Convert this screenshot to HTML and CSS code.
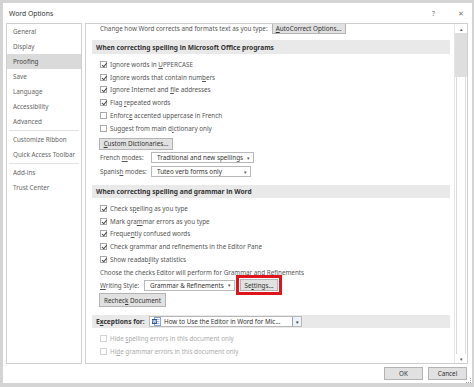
FILE: index.html
```html
<!DOCTYPE html>
<html>
<head>
    <title>Word Options</title>
    <link rel="stylesheet" href="styles.css">
</head>
<body>
    <div class="dialog">
        <div class="titlebar">
            <span class="title">Word Options</span>
            <span class="help">?</span>
            <span class="close">&#x2715;</span>
        </div>

        <div class="main">
            <div class="nav">
                <div class="nav-item">General</div>
                <div class="nav-item">Display</div>
                <div class="nav-item selected">Proofing</div>
                <div class="nav-item">Save</div>
                <div class="nav-item">Language</div>
                <div class="nav-item">Accessibility</div>
                <div class="nav-item">Advanced</div>
                <div class="nav-sep"></div>
                <div class="nav-item">Customize Ribbon</div>
                <div class="nav-item">Quick Access Toolbar</div>
                <div class="nav-sep"></div>
                <div class="nav-item">Add-ins</div>
                <div class="nav-item">Trust Center</div>
            </div>

            <div class="panel">
                <div class="content">
                    <div class="row autocorrect-row">
                        <span class="label">Change how Word corrects and formats text as you type:</span>
                        <button class="btn autocorrect-btn"><u>A</u>utoCorrect Options...</button>
                    </div>

                    <div class="section-head head-office">When correcting spelling in Microsoft Office programs</div>

                    <div class="checks checks-office">
                        <div class="check on"><span class="box"></span><span>Ignore words in <u>U</u>PPERCASE</span></div>
                        <div class="check on"><span class="box"></span><span>Ignore words that contain num<u>b</u>ers</span></div>
                        <div class="check on"><span class="box"></span><span>Ignore Internet and <u>f</u>ile addresses</span></div>
                        <div class="check on"><span class="box"></span><span>Flag <u>r</u>epeated words</span></div>
                        <div class="check"><span class="box"></span><span>Enforc<u>e</u> accented uppercase in French</span></div>
                        <div class="check"><span class="box"></span><span>Suggest from main d<u>i</u>ctionary only</span></div>
                    </div>

                    <button class="btn dict-btn"><u>C</u>ustom Dictionaries...</button>

                    <div class="row mode-row first-mode">
                        <span class="label mode-label">French <u>m</u>odes:</span>
                        <span class="select french-select">Traditional and new spellings<span class="caret">&#9662;</span></span>
                    </div>
                    <div class="row mode-row">
                        <span class="label mode-label">Spanis<u>h</u> modes:</span>
                        <span class="select spanish-select">Tuteo verb forms only<span class="caret">&#9662;</span></span>
                    </div>

                    <div class="section-head head-word">When correcting spelling and grammar in Word</div>

                    <div class="checks checks-word">
                        <div class="check on"><span class="box"></span><span>Check s<u>p</u>elling as you type</span></div>
                        <div class="check on"><span class="box"></span><span>Mark gra<u>m</u>mar errors as you type</span></div>
                        <div class="check on"><span class="box"></span><span>Freque<u>n</u>tly confused words</span></div>
                        <div class="check on"><span class="box"></span><span>Check grammar and refinements in the Editor Pane</span></div>
                        <div class="check on"><span class="box"></span><span>Show readab<u>i</u>lity statistics</span></div>
                    </div>

                    <div class="row choose-row">
                        <span class="label">Choose the checks Editor will perform for Grammar and Refinements</span>
                    </div>

                    <div class="row style-row">
                        <span class="label style-label"><u>W</u>riting Style:</span>
                        <span class="select style-select">Grammar &amp; Refinements<span class="caret">&#9662;</span></span>
                        <button class="btn settings-btn">Se<u>t</u>tings...</button>
                    </div>

                    <button class="btn recheck-btn">Rechec<u>k</u> Document</button>

                    <div class="section-head head-except">
                        <span class="except-label">E<u>x</u>ceptions for:</span>
                        <span class="combo">
                            <span class="doc-icon">
                                <svg width="9" height="9" viewBox="0 0 9 9">
                                    <rect x="2.5" y="0.5" width="6" height="8" fill="#fff" stroke="#8aa4c8"/>
                                    <rect x="4" y="2" width="3.5" height="0.8" fill="#8aa4c8"/>
                                    <rect x="4" y="4" width="3.5" height="0.8" fill="#8aa4c8"/>
                                    <rect x="4" y="6" width="3.5" height="0.8" fill="#8aa4c8"/>
                                    <rect x="0" y="2" width="5" height="5" fill="#2b5797"/>
                                    <text x="2.5" y="6" font-size="4" font-family="Liberation Sans, sans-serif" font-weight="bold" fill="#fff" text-anchor="middle">W</text>
                                </svg>
                            </span>
                            <span class="combo-text">How to Use the Editor in Word for Mic...</span>
                            <span class="combo-drop">&#9662;</span>
                        </span>
                    </div>

                    <div class="checks checks-except">
                        <div class="check disabled"><span class="box"></span><span>Hide <u>s</u>pelling errors in this document only</span></div>
                        <div class="check disabled"><span class="box"></span><span>Hi<u>d</u>e grammar errors in this document only</span></div>
                    </div>
                </div>

                <div class="scrollbar">
                    <div class="arrow">&#9652;</div>
                    <div class="thumb"></div>
                    <div class="track"></div>
                    <div class="arrow">&#9662;</div>
                </div>
            </div>
        </div>

        <div class="footer">
            <button class="btn footer-btn">OK</button>
            <button class="btn footer-btn">Cancel</button>
            <span class="grip"></span>
        </div>
    </div>
</body>
</html>
```

FILE: styles.css
```css
html, body {
    margin: 0;
    padding: 0;
}
body {
    background-color: #d4d4d4;
    width: 474px;
    height: 387px;
    padding: 3px 2px 4px 3px;
    box-sizing: border-box;
    font-family: "Noto Sans", "Open Sans", sans-serif;
    font-size: 6.3px;
    color: #555;
    overflow: hidden;
}
u {
    text-decoration: underline;
    text-underline-offset: 1px;
}
.dialog {
    background-color: #fff;
    height: 380px;
    display: flex;
    flex-direction: column;
    padding-right: 4px;
}

/* title bar */
.titlebar {
    height: 20px;
    display: flex;
    align-items: center;
    padding-left: 6px;
    color: #333;
}
.title {
    font-size: 6.8px;
    flex: 1;
}
.help {
    font-size: 7px;
    color: #777;
    width: 26px;
}
.close {
    font-size: 7px;
    color: #777;
    width: 10px;
}

/* body */
.main {
    height: 341px;
    display: flex;
    gap: 3px;
    padding-left: 3px;
}
.nav {
    width: 76px;
    border: 1px solid #cfcfcf;
    box-sizing: border-box;
}
.nav-item {
    height: 15px;
    line-height: 15px;
    padding-left: 6px;
    color: #666;
    white-space: nowrap;
}
.nav-item.selected {
    background-color: #dadada;
    color: #444;
}
.nav-sep {
    margin: 1px 2px;
    border-top: 1px solid #e2e2e2;
}

.panel {
    flex: 1;
    border: 1px solid #cfcfcf;
    display: flex;
    overflow: hidden;
}
.content {
    flex: 1;
    padding-left: 6px;
    padding-right: 4px;
    overflow: hidden;
}
.row {
    display: flex;
    align-items: center;
    white-space: nowrap;
}
.label {
    margin-left: 8px;
}
.autocorrect-row {
    height: 12px;
    margin-top: -2px;
}
.autocorrect-btn {
    margin-left: 4px;
    width: 74px;
}

.section-head {
    background-color: #e9e9e9;
    color: #333;
    font-weight: bold;
    font-size: 6.6px;
    padding-left: 4px;
    display: flex;
    align-items: center;
    white-space: nowrap;
}
.head-office {
    height: 14px;
    margin-top: 6px;
}
.head-word {
    height: 13px;
    margin-top: 6px;
}
.head-except {
    height: 13px;
    margin-top: 8px;
}

.checks-office {
    margin-top: 4px;
}
.checks-word {
    margin-top: 4.5px;
}
.checks-except {
    margin-top: 3.5px;
}
.check {
    height: 12.75px;
    display: flex;
    align-items: center;
    padding-left: 8px;
    white-space: nowrap;
}
.checks-except .check {
    height: 13px;
}
.box {
    width: 7px;
    height: 7px;
    border: 1px solid #a8a8a8;
    box-sizing: border-box;
    margin-right: 3px;
    position: relative;
    background-color: #fff;
}
.check.on .box::after {
    content: "";
    position: absolute;
    left: 1.5px;
    top: 0px;
    width: 2px;
    height: 3.5px;
    border-right: 1px solid #444;
    border-bottom: 1px solid #444;
    transform: rotate(40deg);
}
.check.disabled {
    color: #ababab;
}
.check.disabled .box {
    border-color: #d4d4d4;
}

.btn {
    font-family: inherit;
    font-size: 6.3px;
    color: #333;
    background-color: #e1e1e1;
    border: 1px solid #b4b4b4;
    padding: 0;
    height: 11px;
    line-height: 9px;
    white-space: nowrap;
}
.dict-btn {
    display: block;
    margin-top: 3px;
    margin-left: 7px;
    width: 74px;
    height: 12px;
}
.recheck-btn {
    display: block;
    margin-top: 1px;
    margin-left: 7px;
    width: 67px;
    height: 14px;
}

.mode-row {
    height: 14px;
}
.first-mode {
    margin-top: 1px;
}
.mode-label {
    width: 51px;
}
.select {
    height: 11px;
    border: 1px solid #b8b8b8;
    box-sizing: border-box;
    display: flex;
    align-items: center;
    padding-left: 5px;
    position: relative;
    color: #333;
}
.caret {
    position: absolute;
    right: 3px;
    font-size: 5px;
    color: #555;
}
.french-select {
    width: 103px;
}
.spanish-select {
    width: 100px;
}

.choose-row {
    height: 12px;
    margin-top: 0.5px;
}
.style-row {
    height: 14px;
}
.style-label {
    width: 44px;
}
.style-select {
    width: 91px;
}
.settings-btn {
    margin-left: 5px;
    width: 38px;
    height: 12px;
    outline: 3px solid #e0141c;
    outline-offset: 1px;
}

.except-label {
    width: 53px;
}
.combo {
    width: 153px;
    height: 11px;
    background-color: #fff;
    border: 1px solid #b8b8b8;
    box-sizing: border-box;
    display: flex;
    align-items: center;
    font-weight: normal;
    font-size: 6.3px;
    color: #333;
}
.doc-icon {
    display: flex;
    margin: 0 3px 0 2px;
}
.combo-text {
    flex: 1;
}
.combo-drop {
    width: 8px;
    height: 9px;
    border-left: 1px solid #8aa4c8;
    background-color: #eef3fa;
    font-size: 5px;
    display: flex;
    align-items: center;
    justify-content: center;
    color: #333;
}

/* scrollbar */
.scrollbar {
    width: 12px;
    display: flex;
    flex-direction: column;
    border-left: 1px solid #e6e6e6;
}
.arrow {
    height: 9px;
    font-size: 5px;
    color: #555;
    display: flex;
    align-items: center;
    justify-content: center;
}
.thumb {
    height: 44px;
    background-color: #dedede;
}
.track {
    flex: 1;
    margin: 0 1px;
    border-left: 1px solid #dcdcdc;
    border-right: 1px solid #dcdcdc;
}

/* footer */
.footer {
    flex: 1;
    display: flex;
    justify-content: flex-end;
    align-items: flex-start;
    gap: 5px;
    padding-top: 3px;
    padding-right: 1px;
    position: relative;
}
.footer-btn {
    width: 39px;
    height: 13px;
}
.grip {
    position: absolute;
    right: -3px;
    bottom: 0;
    width: 4px;
    height: 4px;
    border-right: 1px dotted #999;
    border-bottom: 1px dotted #999;
}
```
